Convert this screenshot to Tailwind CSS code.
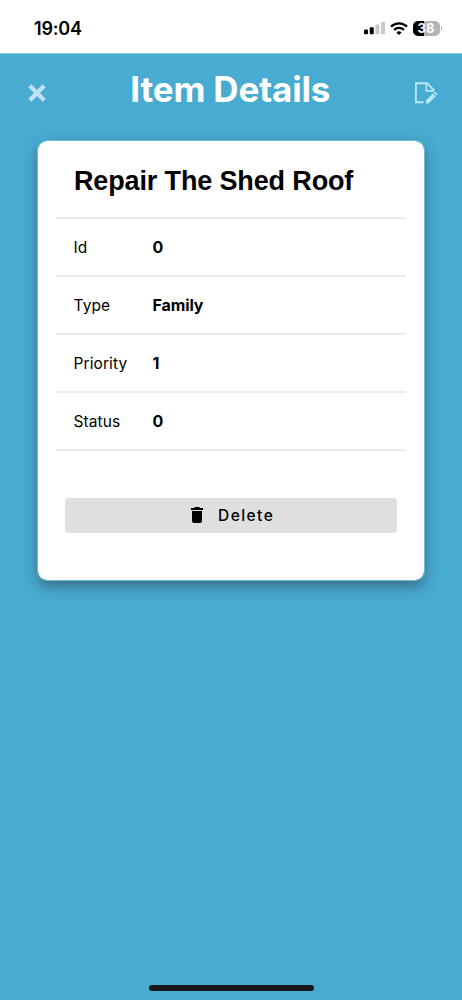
<!DOCTYPE html>
<html lang="en">
<head>
<meta charset="utf-8">
<meta name="viewport" content="width=device-width, initial-scale=1">
<title>Item Details</title>
<script src="https://cdn.jsdelivr.net/npm/@tailwindcss/browser@4"></script>
</head>
<body class="flex h-[1000px] flex-col overflow-hidden bg-[#48abd1] font-['Inter','Liberation_Sans',sans-serif] text-black">
  <header class="flex h-[54px] shrink-0 items-center justify-between border-b border-[#8dcbe2] bg-white pt-[3px] pr-[20px] pl-[34px]">
    <span class="pt-[2px] text-[18px] leading-6 font-semibold tracking-[-0.2px]">19:04</span>
    <div class="flex items-center">
      <svg class="h-[14px] w-[21px]" viewBox="0 0 21 14">
        <rect x="0" y="8.5" width="4" height="4.8" rx="1"/>
        <rect x="5.7" y="6.3" width="4" height="7" rx="1"/>
        <rect x="11.4" y="3.5" width="4" height="9.8" rx="1" fill="#c9c9c9"/>
        <rect x="17" y="0.7" width="4" height="12.6" rx="1" fill="#c9c9c9"/>
      </svg>
      <svg class="ml-[5px] h-[13px] w-[18px]" viewBox="0 0 18 13" fill="none" stroke="#000" stroke-width="2.3">
        <path d="M1 4.7Q4.4 1.4 9 1.4T17 4.7"/>
        <path d="M4 7.9Q6.2 5.8 9 5.8T14 7.9"/>
        <path d="M9 13L6.4 10.4Q9 8.2 11.6 10.4Z" fill="#000" stroke="none"/>
      </svg>
      <div class="ml-[5px] flex h-[15px] w-[27px] items-center justify-center rounded-[5px] bg-linear-to-r from-black from-40% to-[#b4b4b4] to-40% text-[13px] leading-none font-bold text-white">38</div>
      <div class="ml-px h-[5px] w-[1.5px] rounded-r-full bg-[#b4b4b4]"></div>
    </div>
  </header>

  <div class="flex h-[70px] shrink-0 items-center justify-between pr-[23.5px] pl-[28px]">
    <svg class="mt-[7px] h-[18px] w-[18px]" viewBox="0 0 18 18" stroke="#bfe3f5" stroke-width="4.2"><path d="M1.8 1.8L16.2 16.2M16.2 1.8L1.8 16.2"/></svg>
    <h1 class="text-[35px] leading-[44px] font-bold tracking-[-0.15px] text-white">Item Details</h1>
    <svg class="mt-[7px] h-6 w-6" viewBox="0 0 24 24" fill="none" stroke="#b5e7fb" stroke-width="1.9">
      <path d="M9.5 21.2H1.9V2.3H13.2L20.2 9.5"/>
      <path d="M12.3 2.3V9.9H20.2" stroke-width="1.7"/>
      <path d="M11.8 22.6V19.6L18.9 12.5L21.7 15.3L14.6 22.6Z" fill="#b5e7fb" stroke="none"/>
      <path d="M19.6 11.8L20.6 10.9Q21 10.6 21.4 10.9L23.3 12.8Q23.6 13.2 23.3 13.6L22.4 14.6Z" fill="#b5e7fb" stroke="none"/>
    </svg>
  </div>

  <main class="mx-[38px] mt-[17px] h-[439px] shrink-0 rounded-[9px] bg-white px-[18px] shadow-[0_6px_14px_rgba(50,60,75,0.6)] outline outline-[#69bbda]">
    <h2 class="h-[77.5px] border-b-2 border-[#ebebeb] pt-[22px] pl-[18px] font-['Liberation_Sans',sans-serif] text-[27px] leading-9 font-bold tracking-[-0.14px] whitespace-nowrap">Repair The Shed Roof</h2>
    <dl class="text-[15.5px]">
      <div class="flex h-[58px] items-center border-b-2 border-[#ebebeb] pt-px pl-[17.5px]"><dt class="w-[79px] pt-px tracking-[0.1px]">Id</dt><dd class="text-[16px] font-bold tracking-[-0.1px]">0</dd></div>
      <div class="flex h-[58px] items-center border-b-2 border-[#ebebeb] pt-px pl-[17.5px]"><dt class="w-[79px] pt-px tracking-[0.1px]">Type</dt><dd class="text-[16px] font-bold tracking-[-0.1px]">Family</dd></div>
      <div class="flex h-[58px] items-center border-b-2 border-[#ebebeb] pt-px pl-[17.5px]"><dt class="w-[79px] pt-px tracking-[0.1px]">Priority</dt><dd class="text-[16px] font-bold tracking-[-0.1px]">1</dd></div>
      <div class="flex h-[58px] items-center border-b-2 border-[#ebebeb] pt-px pl-[17.5px]"><dt class="w-[79px] pt-px tracking-[0.1px]">Status</dt><dd class="text-[16px] font-bold tracking-[-0.1px]">0</dd></div>
    </dl>
    <button class="mx-[9px] mt-[47.5px] flex h-[35px] w-[332px] items-center rounded-[4px] bg-[#dfdfdf] pl-[126px] text-[15.5px] tracking-[1.45px]">
      <svg class="mb-px h-4 w-3" viewBox="0 0 12 16"><path d="M0 1H3L4 0H8L9 1H12V3H0ZM1 4H11V14Q11 16 9 16H3Q1 16 1 14Z"/></svg>
      <span class="ml-[15px] pt-px font-medium">Delete</span>
    </button>
  </main>

  <div class="mx-auto mt-auto mb-[9px] h-[6px] w-[165px] shrink-0 rounded-full bg-[#17171b]"></div>
</body>
</html>
